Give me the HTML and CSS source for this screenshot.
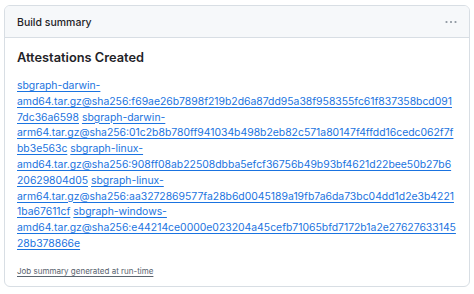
FILE: index.html
```html
<!DOCTYPE html>
<html>
<head>
<meta charset="utf-8">
<link rel="stylesheet" href="styles.css">
</head>
<body>
<div class="card">
  <div class="card-header">
    <span class="card-title">Build summary</span>
    <span class="kebab" aria-label="More options">
      <svg width="12" height="4" viewBox="0 0 12 4"><circle cx="1.5" cy="2" r="1.1"/><circle cx="6" cy="2" r="1.1"/><circle cx="10.5" cy="2" r="1.1"/></svg>
    </span>
  </div>
  <div class="card-body">
    <h3 class="heading">Attestations Created</h3>
    <p class="links"><a href="#">sbgraph-darwin-<br>amd64.tar.gz@sha256:f69ae26b7898f219b2d6a87dd95a38f958355fc61f837358bcd091<br>7dc36a6598</a> <a href="#">sbgraph-darwin-<br>arm64.tar.gz@sha256:01c2b8b780ff941034b498b2eb82c571a80147f4ffdd16cedc062f7f<br>bb3e563c</a> <a href="#">sbgraph-linux-<br>amd64.tar.gz@sha256:908ff08ab22508dbba5efcf36756b49b93bf4621d22bee50b27b6<br>20629804d05</a> <a href="#">sbgraph-linux-<br>arm64.tar.gz@sha256:aa3272869577fa28b6d0045189a19fb7a6da73bc04dd1d2e3b4221<br>1ba67611cf</a> <a href="#">sbgraph-windows-<br>amd64.tar.gz@sha256:e44214ce0000e023204a45cefb71065bfd7172b1a2e27627633145<br>28b378866e</a></p>
    <a class="footnote" href="#">Job summary generated at run-time</a>
  </div>
</div>
</body>
</html>
```
FILE: styles.css
```css
html, body {
  margin: 0;
  background: #ffffff;
}
body {
  padding: 5px 4px;
  font-family: Inter, "Noto Sans", sans-serif;
  color: #1f2328;
}
.card {
  border: 1px solid #d8dee4;
  border-radius: 6px;
  overflow: hidden;
  height: 282px;
  box-sizing: border-box;
  display: flex;
  flex-direction: column;
}
.card-header {
  height: 32px;
  box-sizing: border-box;
  background: #f6f8fa;
  border-bottom: 1px solid #d8dee4;
  display: flex;
  align-items: center;
  justify-content: space-between;
  padding: 1px 12px 0 12px;
}
.card-title {
  font-size: 10.5px;
  font-weight: 500;
  color: #1f2328;
}
.kebab {
  display: flex;
  fill: #8c959f;
}
.card-body {
  padding: 10px 12px 0 12px;
}
.heading {
  margin: 0 0 10px 0;
  font-size: 12.8px;
  font-weight: 600;
  line-height: 20px;
  color: #1f2328;
}
.links {
  margin: 0 0 6px 0;
  font-size: 10.4px;
  line-height: 15.8px;
  white-space: nowrap;
}
.links a {
  color: #1a73e0;
  text-decoration: underline;
  text-underline-offset: 2px;
}
.footnote {
  font-size: 8px;
  color: #59636e;
  text-decoration: underline;
  text-underline-offset: 2px;
}
```
